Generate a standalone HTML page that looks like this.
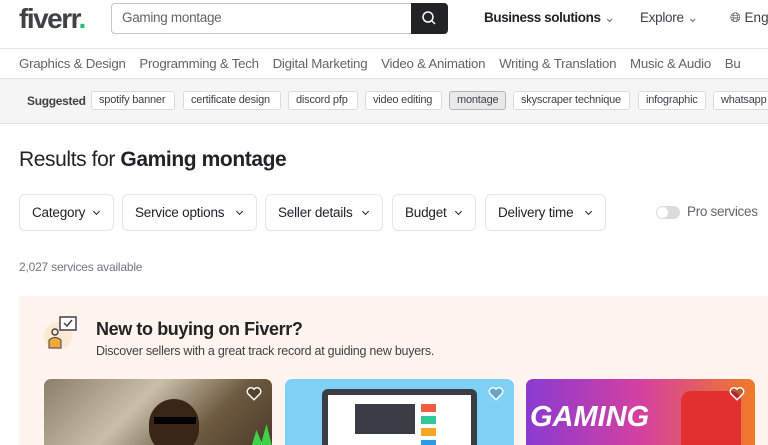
<!DOCTYPE html>
<html><head><meta charset="utf-8"><style>
*{margin:0;padding:0;box-sizing:border-box}
html,body{width:768px;height:445px;overflow:hidden}
body{background:#fff;font-family:"Liberation Sans",sans-serif;color:#404145;position:relative}
.a{position:absolute;white-space:nowrap}
.chip{position:absolute;top:91px;height:19px;border:1px solid #dadbdd;border-radius:3px;background:#fff;font-size:11px;line-height:17px;padding:0 7px;color:#404145;letter-spacing:-.2px}
.f{position:absolute;top:194px;height:37px;border:1px solid #e4e5e7;border-radius:6px;font-size:13.5px;line-height:35px;color:#222325;padding-left:12px;letter-spacing:-.2px}
.f:after{content:"";position:absolute;right:14px;top:14px;width:4px;height:4px;border-right:1.5px solid #222;border-bottom:1.5px solid #222;transform:rotate(45deg)}
.card{position:absolute;top:379px;height:70px;border-radius:7px 7px 0 0;overflow:hidden}
.heart{position:absolute;top:6px;width:18px;height:18px}
</style></head><body>
<div class="a" style="left:19px;top:3px;font-size:28px;font-weight:bold;color:#404145;letter-spacing:-1.5px">fiverr<span style="color:#1dbf73">.</span></div>
<div class="a" style="left:111px;top:3px;width:301px;height:31px;border:1px solid #c5c6c9;border-radius:4px 0 0 4px"></div>
<div class="a" style="left:122px;top:10px;font-size:13.5px;color:#62646a;letter-spacing:-.3px">Gaming montage</div>
<div class="a" style="left:411px;top:3px;width:37px;height:31px;background:#222325;border-radius:0 4px 4px 0">
<svg width="37" height="31"><circle cx="17" cy="14" r="5" fill="none" stroke="#fff" stroke-width="1.5"/><line x1="20.5" y1="17.5" x2="24" y2="21" stroke="#fff" stroke-width="1.5"/></svg></div>
<div class="a" style="left:484px;top:10px;font-size:13.5px;font-weight:bold;color:#222325;letter-spacing:-.4px">Business solutions <span style="font-weight:normal;color:#777">&#8964;</span></div>
<div class="a" style="left:640px;top:10px;font-size:13.5px;color:#404145;letter-spacing:-.3px">Explore <span style="color:#777">&#8964;</span></div>
<div class="a" style="left:730px;top:10px;font-size:13.5px;color:#404145">&#127760;&#xFE0E; Eng</div>
<div class="a" style="left:0;top:48px;width:768px;height:1px;background:#e4e5e7"></div>
<div class="a" style="left:19px;top:56px;font-size:13.3px;color:#62646a;letter-spacing:-.25px;word-spacing:0">Graphics &amp; Design&nbsp;&nbsp;&nbsp;&nbsp;Programming &amp; Tech&nbsp;&nbsp;&nbsp;&nbsp;Digital Marketing&nbsp;&nbsp;&nbsp;&nbsp;Video &amp; Animation&nbsp;&nbsp;&nbsp;&nbsp;Writing &amp; Translation&nbsp;&nbsp;&nbsp;&nbsp;Music &amp; Audio&nbsp;&nbsp;&nbsp;&nbsp;Bu</div>
<div class="a" style="left:0;top:78px;width:768px;height:46px;background:#f5f5f5;border-top:1px solid #e4e5e7;border-bottom:1px solid #e4e5e7"></div>
<div class="a" style="left:27px;top:94px;font-size:12px;font-weight:bold;color:#404145;letter-spacing:-.3px">Suggested</div>
<div class="chip" style="left:91px;width:84px">spotify banner</div>
<div class="chip" style="left:183px;width:98px">certificate design</div>
<div class="chip" style="left:288px;width:70px">discord pfp</div>
<div class="chip" style="left:365px;width:77px">video editing</div>
<div class="chip" style="left:449px;width:57px;background:#e9e9e9;border-color:#b5b6ba">montage</div>
<div class="chip" style="left:513px;width:117px">skyscraper technique</div>
<div class="chip" style="left:638px;width:68px">infographic</div>
<div class="chip" style="left:713px;width:70px">whatsapp</div>
<div class="a" style="left:19px;top:148px;font-size:21px;color:#222325;letter-spacing:-.4px">Results for <b>Gaming montage</b></div>
<div class="f" style="left:19px;width:95px">Category</div>
<div class="f" style="left:122px;width:135px">Service options</div>
<div class="f" style="left:265px;width:118px">Seller details</div>
<div class="f" style="left:392px;width:84px">Budget</div>
<div class="f" style="left:485px;width:121px">Delivery time</div>
<div class="a" style="left:656px;top:206px;width:24px;height:13px;border-radius:7px;background:#dadbdd"><div style="position:absolute;left:1px;top:1px;width:11px;height:11px;border-radius:50%;background:#fff"></div></div>
<div class="a" style="left:687px;top:204px;font-size:13.5px;color:#62646a;letter-spacing:-.3px">Pro services</div>
<div class="a" style="left:19px;top:260px;font-size:12px;color:#74767e;letter-spacing:-.2px">2,027 services available</div>
<div class="a" style="left:19px;top:296px;width:760px;height:160px;background:#fff5ee"></div>
<svg class="a" style="left:44px;top:316px" width="36" height="36"><circle cx="14" cy="20" r="14" fill="#fde8d3"/><rect x="16" y="1" width="16" height="13" fill="#fff" stroke="#404145" stroke-width="1.5"/><path d="M20 7l3 3 5-6" fill="none" stroke="#404145" stroke-width="1.5"/><circle cx="11" cy="16" r="3" fill="none" stroke="#404145" stroke-width="1.5"/><path d="M5 32v-8q6-5 12 0v8z" fill="#f2a93b" stroke="#404145"/></svg>
<div class="a" style="left:96px;top:319px;font-size:18px;font-weight:bold;color:#222325;letter-spacing:-.4px">New to buying on Fiverr?</div>
<div class="a" style="left:96px;top:344px;font-size:12.5px;color:#404145;letter-spacing:-.25px">Discover sellers with a great track record at guiding new buyers.</div>
<div class="card" style="left:44px;width:228px;background:linear-gradient(135deg,#8b7f6a,#c9bfa8 40%,#6d5a40 70%,#4a3a28)"><div style="position:absolute;left:105px;top:20px;width:50px;height:55px;border-radius:25px;background:#3a2618"></div><div style="position:absolute;left:110px;top:38px;width:42px;height:7px;background:#000"></div><div style="position:absolute;left:205px;top:45px;width:25px;height:30px;background:#3fd14a;clip-path:polygon(0 100%,30% 20%,50% 60%,70% 0,100% 100%)"></div></div>
<div class="card" style="left:285px;width:229px;background:#7ed0f5"><div style="position:absolute;left:37px;top:10px;width:155px;height:70px;background:#3a3d45;border-radius:6px"></div><div style="position:absolute;left:43px;top:16px;width:143px;height:60px;background:#fff"></div><div style="position:absolute;left:70px;top:25px;width:60px;height:30px;background:#3a3d45"></div><div style="position:absolute;left:136px;top:25px;width:15px;height:8px;background:#f06040"></div><div style="position:absolute;left:136px;top:37px;width:15px;height:8px;background:#2fc99a"></div><div style="position:absolute;left:136px;top:49px;width:15px;height:8px;background:#f5a623"></div><div style="position:absolute;left:136px;top:61px;width:15px;height:8px;background:#2a9be6"></div></div>
<div class="card" style="left:526px;width:229px;background:linear-gradient(90deg,#8a3bd1,#d440a0 50%,#f07a2a)"><div style="position:absolute;left:4px;top:22px;font-size:29px;font-weight:bold;color:#fff;font-style:italic">GAMING</div><div style="position:absolute;left:155px;top:12px;width:60px;height:60px;background:#e03030;border-radius:10px 10px 0 0"></div></div>
<svg class="heart" style="left:245px;top:384px;position:absolute" viewBox="0 0 24 24"><path d="M12 21l-8-8a5 5 0 017-7l1 1 1-1a5 5 0 017 7z" fill="rgba(0,0,0,.2)" stroke="#fff" stroke-width="2"/></svg>
<svg class="heart" style="left:487px;top:384px;position:absolute" viewBox="0 0 24 24"><path d="M12 21l-8-8a5 5 0 017-7l1 1 1-1a5 5 0 017 7z" fill="rgba(0,0,0,.2)" stroke="#fff" stroke-width="2"/></svg>
<svg class="heart" style="left:728px;top:384px;position:absolute" viewBox="0 0 24 24"><path d="M12 21l-8-8a5 5 0 017-7l1 1 1-1a5 5 0 017 7z" fill="rgba(0,0,0,.2)" stroke="#fff" stroke-width="2"/></svg>
</body></html>
